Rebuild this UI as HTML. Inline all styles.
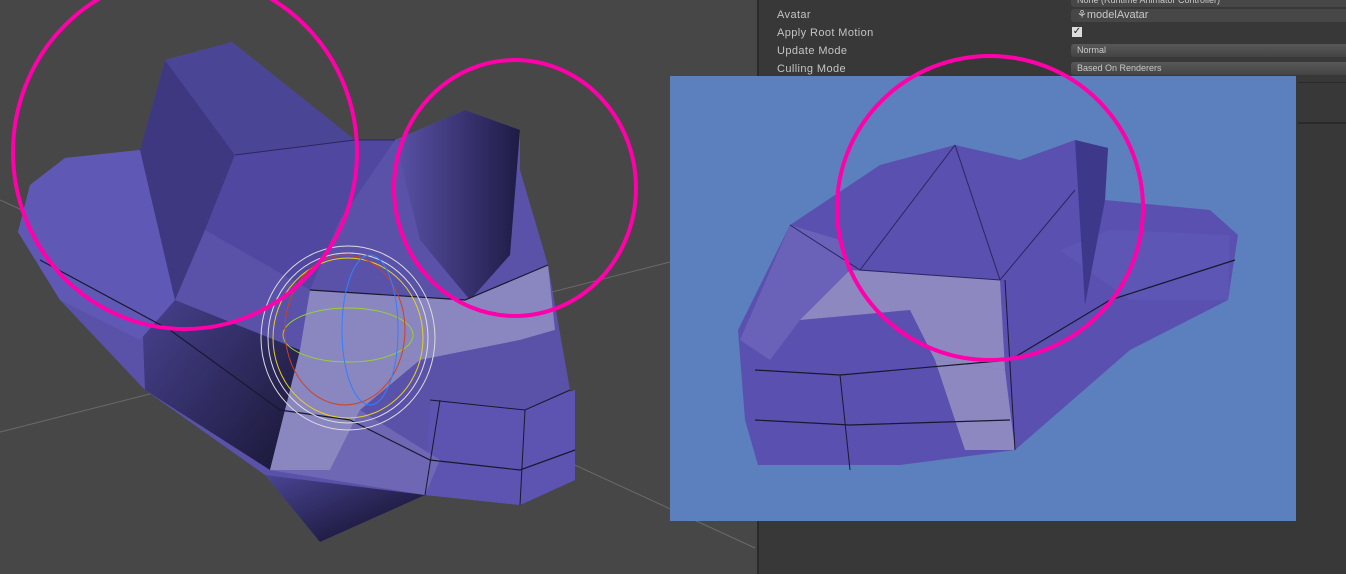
<!DOCTYPE html>
<html><head><meta charset="utf-8"><style>
body{margin:0;width:1346px;height:574px;overflow:hidden;background:#474747;font-family:"Liberation Sans",sans-serif}
.panel{position:absolute;left:757px;top:0;width:589px;height:574px;background:#383838;border-left:2px solid #2a2a2a}
.lbl{position:absolute;left:18px;font-size:11px;color:#c4c4c4;letter-spacing:.4px}
.fld{position:absolute;left:312px;width:290px;height:13px;background:linear-gradient(#585858,#444);border-radius:3px;font-size:9px;color:#c8c8c8;line-height:13px;padding-left:6px;box-sizing:border-box}
</style></head><body>
<div class="panel">
<div class="fld" style="top:-6px;background:#474747">None (Runtime Animator Controller)</div>
<div class="lbl" style="top:9px">Avatar</div><div class="fld" style="top:9px;background:#474747;font-size:11px">&#9880;modelAvatar</div>
<div class="lbl" style="top:27px">Apply Root Motion</div><div style="position:absolute;left:313px;top:27px;width:10px;height:10px;background:#ddd;color:#222;font-size:10px;line-height:10px;text-align:center">✓</div>
<div class="lbl" style="top:45px">Update Mode</div><div class="fld" style="top:44px">Normal</div>
<div class="lbl" style="top:63px">Culling Mode</div><div class="fld" style="top:62px">Based On Renderers</div>
<div style="position:absolute;left:539px;top:82px;width:50px;height:1px;background:#2a2a2a"></div>
<div style="position:absolute;left:539px;top:122px;width:50px;height:2px;background:#2a2a2a"></div>
</div>
<svg width="1346" height="574" style="position:absolute;left:0;top:0">
<defs>
<linearGradient id="dk" x1="0" y1="0" x2="1" y2="1"><stop offset="0" stop-color="#4a4595"/><stop offset="1" stop-color="#0d0b20"/></linearGradient>
<linearGradient id="dk2" x1="0" y1="0" x2="1" y2="0"><stop offset="0" stop-color="#5a52a8"/><stop offset="1" stop-color="#1e1b45"/></linearGradient>
</defs>
<line x1="0" y1="432" x2="670" y2="262" stroke="#6a6a6a" stroke-width="1"/>
<line x1="0" y1="200" x2="755" y2="548" stroke="#6a6a6a" stroke-width="1"/>
<polygon points="18,232 30,185 65,158 140,150 165,60 232,42 355,140 395,140 465,110 520,130 520,170 548,265 570,390 575,480 520,505 425,495 320,542 265,475 145,390 60,300" fill="#5a52a8"/>
<polygon points="265,475 425,495 320,542" fill="url(#dk)"/>
<polygon points="145,390 270,470 300,350 175,300 140,260" fill="url(#dk)" opacity=".85"/>
<polygon points="18,232 30,185 65,158 140,150 175,300 140,340 60,300" fill="#6058b5"/>
<polygon points="140,150 165,60 235,155 205,230 175,300" fill="#3d3880"/>
<polygon points="165,60 232,42 355,140 235,155" fill="#4a4595"/>
<polygon points="235,155 355,140 395,140 340,220 310,290 205,230" fill="#5048a0"/>
<polygon points="395,140 465,110 520,130 510,255 470,300 420,240" fill="url(#dk2)"/>
<polygon points="310,290 465,300 548,265 555,330 520,340 420,360 360,410 330,470 270,470 300,350" fill="#8a86c0"/>
<polygon points="360,410 420,360 520,340 555,330 560,400 525,410 450,400" fill="#5a52a8"/>
<polygon points="430,400 525,410 575,390 575,480 520,505 425,495" fill="#5c54b0"/>
<polygon points="270,470 330,470 360,410 440,460 425,495" fill="#7670b8" opacity=".7"/>
<polyline points="40,260 170,330 280,410 350,420 430,460 520,470 575,450" fill="none" stroke="#1a1830" stroke-width="1.2"/>
<polyline points="310,290 465,300 548,265" fill="none" stroke="#1a1830" stroke-width="1.2"/>
<polyline points="430,400 525,410 570,390" fill="none" stroke="#1a1830" stroke-width="1"/>
<line x1="525" y1="410" x2="520" y2="505" stroke="#1a1830"/>
<line x1="440" y1="400" x2="425" y2="495" stroke="#1a1830"/>
<polyline points="235,155 355,140 395,140" fill="none" stroke="#2a2660"/>
<ellipse cx="348" cy="338" rx="87" ry="92" fill="none" stroke="#ddd" stroke-width="1"/>
<ellipse cx="348" cy="338" rx="80" ry="85" fill="none" stroke="#ddd" stroke-width="1"/>
<ellipse cx="348" cy="338" rx="75" ry="80" fill="none" stroke="#e8d020" stroke-width="1"/>
<ellipse cx="348" cy="335" rx="65" ry="27" fill="none" stroke="#9ad030" stroke-width="1"/>
<ellipse cx="345" cy="330" rx="60" ry="75" fill="none" stroke="#d04020" stroke-width="1"/>
<ellipse cx="370" cy="330" rx="28" ry="75" fill="none" stroke="#3080ff" stroke-width="1"/>
<rect x="670" y="76" width="626" height="445" fill="#5b80bd"/>
<polygon points="738,330 790,225 880,165 955,145 1020,160 1075,140 1108,148 1105,200 1210,210 1238,235 1228,300 1130,350 1015,450 900,465 758,465 745,420" fill="#5a50b0"/>
<polygon points="740,340 790,225 840,240 850,280 800,320 770,360" fill="#6a62b8"/>
<polygon points="800,320 850,270 1000,280 1005,370 935,360 910,310" fill="#8e88c0"/>
<polygon points="935,360 1005,370 1015,450 965,450" fill="#8e88c0"/>
<polygon points="1060,250 1110,230 1230,235 1228,300 1130,300" fill="#5e56b4"/>
<polygon points="1075,140 1108,148 1105,200 1085,305" fill="#3e388a"/>
<polyline points="755,370 840,375 1010,360 1110,300 1235,260" fill="none" stroke="#1a1830" stroke-width="1.2"/>
<polyline points="755,420 850,425 1010,420" fill="none" stroke="#1a1830" stroke-width="1.2"/>
<polyline points="790,225 860,270 1000,280 1075,190" fill="none" stroke="#2a2660"/>
<line x1="955" y1="145" x2="860" y2="270" stroke="#2a2660"/>
<line x1="955" y1="145" x2="1000" y2="280" stroke="#2a2660"/>
<line x1="840" y1="375" x2="850" y2="470" stroke="#1a1830"/>
<line x1="1005" y1="280" x2="1015" y2="450" stroke="#1a1830"/>
<ellipse cx="185" cy="152" rx="172" ry="177" fill="none" stroke="#ff00aa" stroke-width="4"/>
<ellipse cx="515" cy="188" rx="121" ry="128" fill="none" stroke="#ff00aa" stroke-width="4"/>
<ellipse cx="990" cy="208" rx="153" ry="152" fill="none" stroke="#ff00aa" stroke-width="4"/>
</svg>
</body></html>
